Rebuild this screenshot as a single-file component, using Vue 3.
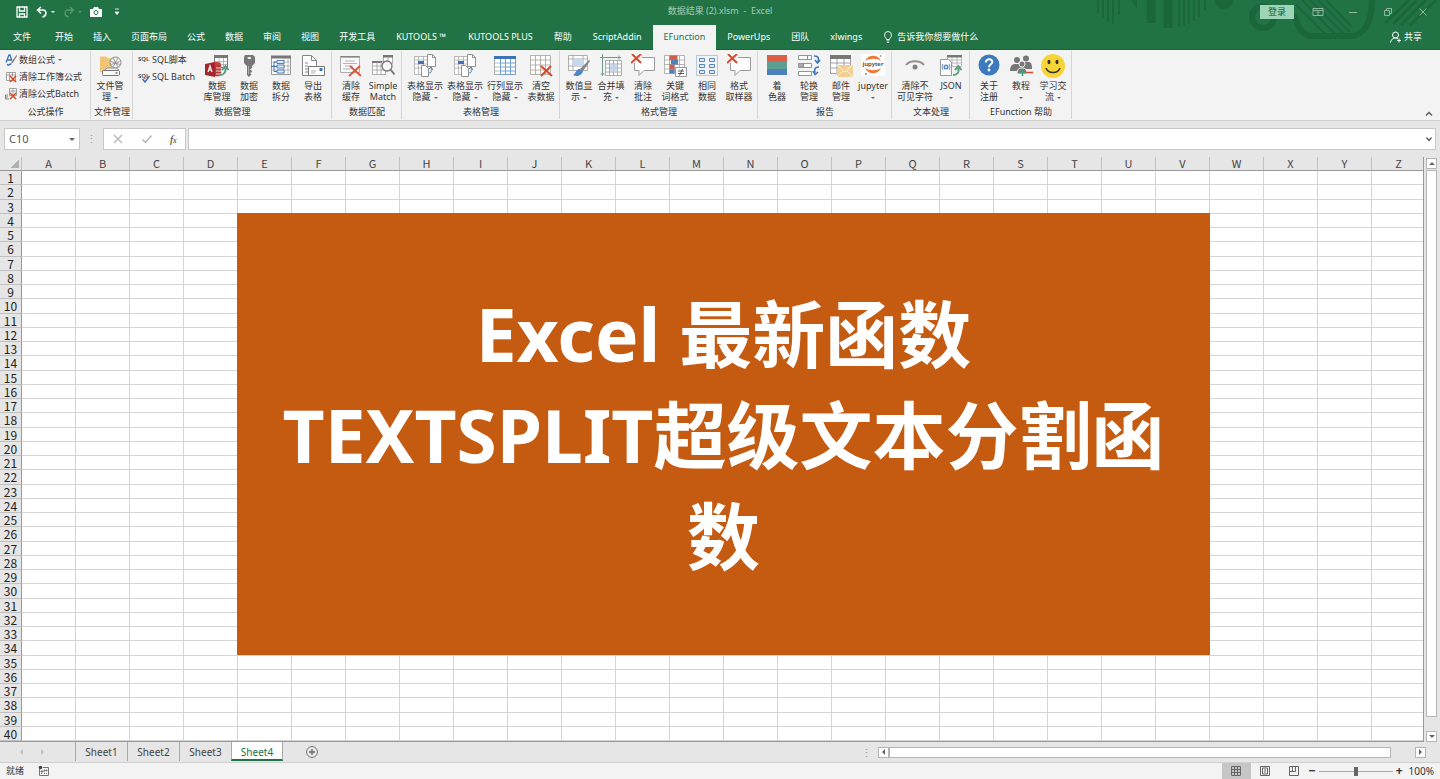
<template>
    <div class="excel">
        <svg class="symbols" aria-hidden="true">
            <symbol id="array" viewBox="0 0 12 12">
                <path d="M1 8.500 4 1h1l2 6M2.200 6H6" fill="none" stroke="#3c74b8" stroke-width="1.300" />
                <path d="M11.500 1 7 7.500 5.500 10l2.500-1.500L12 2z" fill="#777" />
                <path d="M2 10.500c2 1 3 .5 4-1" fill="none" stroke="#3c74b8" stroke-width="1.500" />
            </symbol>
            <symbol id="clear-book" viewBox="0 0 12 12">
                <path d="M1.500 1.500h9v8h-9zM1.500 4h9M4.500 1.500v8M7.500 1.500v4" fill="#fff" stroke="#8a8a8a" stroke-width=".8" />
                <path d="m5 5 6 6M11 5l-6 6" stroke="#d9492c" stroke-width="1.600" />
            </symbol>
            <symbol id="clear-batch" viewBox="0 0 12 12">
                <path d="M4.500.5h7v7h-7zM4.500 3h7M8 .5v7" fill="#fff" stroke="#8a8a8a" stroke-width=".8" />
                <path d="M3 7H.5v4H4M.5 9H3" fill="none" stroke="#777" stroke-width=".9" />
                <path d="m5 5 6 6M11 5l-6 6" stroke="#d9492c" stroke-width="1.600" />
            </symbol>
            <symbol id="check" viewBox="0 0 12 12">
                <path d="m4.500 8 2.500 3 4.500-6" fill="none" stroke="#3c74b8" stroke-width="1.500" />
            </symbol>
            <symbol id="files" viewBox="0 0 24 24">
                <path d="M2 4V2.500h6L9.500 4H14v14H2z" fill="#f0c577" />
                <circle cx="17.500" cy="8.500" r="5.500" fill="#f4f4f4" stroke="#858585" />
                <path d="M12.500 7c3 2 7 2 10 0M12.500 11c3-2 7-2 10 0M15 4l5 9M20 4l-5 9" fill="none" stroke="#858585" stroke-width=".8" />
                <path d="m7 16 2-2h9l3 2" fill="#eee" stroke="#858585" stroke-width=".8" />
                <rect x="4.500" y="16.500" width="17" height="5" rx="1" fill="#f8f8f8" stroke="#777" />
                <circle cx="18.500" cy="19" r="1" fill="#777" />
            </symbol>
            <symbol id="database" viewBox="0 0 24 24">
                <path d="M9.500 1.500h13v12h-13z" fill="#fff" stroke="#777" />
                <path d="M9 1h14v3H9z" fill="#777" />
                <path d="M10 7.500h12M10 10.500h12M14 4v9M18.500 4v9" stroke="#aaa" stroke-width=".8" />
                <ellipse cx="11.500" cy="10" rx="4.500" ry="2" fill="#c8403c" />
                <path d="M9 11h7v10c-2 2-5 1-7 1z" fill="#b53a38" />
                <path d="M11 14h5M11 17h5M11 20h5" stroke="#fff" stroke-width=".8" />
                <path d="M0 10 10 8v15L0 21z" fill="#a4262c" />
                <path d="m3 18 2-6 2 6M3.800 16h2.500" fill="none" stroke="#fff" stroke-width="1.200" />
                <path d="M15 21c4 0 6-3 5.500-7M17 16l3.500-4 3 4" fill="none" stroke="#5c9e83" stroke-width="2" />
            </symbol>
            <symbol id="key" viewBox="0 0 24 24">
                <path d="M8 1h8l2 2v6l-3 3v2l-2 1.500 2 1.500v1l-2 1 1.500 1.500L12 23l-2-2v-9L7 9V3z" fill="#777" />
                <rect x="10.500" y="3" width="3.500" height="2" rx="1" fill="#f3f3f3" />
                <path d="M11.500 12v8" stroke="#bbb" stroke-width=".8" />
            </symbol>
            <symbol id="split" viewBox="0 0 24 24">
                <path d="M2.500 2.500h19v18h-19z" fill="#fff" stroke="#808080" stroke-width=".8" />
                <path d="M2 1.500h20v3H2z" fill="#777" />
                <path d="M3 8h19M3 12h19M3 16h19M15 4v16M19 4v16" stroke="#aaa" stroke-width=".8" />
                <path d="M8 6.500h7v3H8zM8 11h7v3H8zM8 16h7v3H8z" fill="#e5effa" stroke="#3c74b8" stroke-width=".9" />
                <path d="M8 8H5v9.500h3M2 12.500h6" fill="none" stroke="#3c74b8" />
            </symbol>
            <symbol id="export" viewBox="0 0 24 24">
                <path d="M1.500 1.500h9l5 5v15h-14z" fill="#fff" stroke="#858585" />
                <path d="M10.500 1.500v5h5M4 9h3M4 12h3M4 15h3M4 18h3" fill="none" stroke="#858585" />
                <path d="M7.500 12.500h16v9h-16z" fill="#fff" stroke="#777" />
                <path d="M10 17h5M10 19h4" stroke="#999" stroke-width=".8" />
                <path d="M18.500 14h3v3h-3z" fill="#3c74b8" />
            </symbol>
            <symbol id="clear-cache" viewBox="0 0 24 24">
                <path d="M1.500 3.500h19v15h-19z" fill="#fafafa" stroke="#999" stroke-width=".8" />
                <path d="M1 2.500h20" stroke="#888" />
                <path d="M6 7h10M4 9.500h14M6 12h8M4 15h8" stroke="#aaa" stroke-width=".9" />
                <path d="m11 12 11 10M21 12 10 22" stroke="#d9593e" stroke-width="2" />
            </symbol>
            <symbol id="match" viewBox="0 0 24 24">
                <path d="M12.500 2.500h9v7h-9zM1.500 7.500h13v13h-13z" fill="#fff" stroke="#999" stroke-width=".8" />
                <path d="M12 1h10v2.500H12zM1 7h10v2H1z" fill="#777" />
                <path d="M2 12h11M2 16h11M6 8v12M10 8v12M17 3v5" stroke="#999" stroke-width=".8" />
                <circle cx="16" cy="12" r="5" fill="#f7f7f7" stroke="#777" stroke-width="1.300" />
                <path d="m19.500 15.500 4 5" stroke="#777" stroke-width="2" />
            </symbol>
            <symbol id="show-hide" viewBox="0 0 24 24">
                <path d="M1.500 2.500h13v18h-13zM1.500 6h13M1.500 10h13M1.500 14h10M5.500 2.500v18M10.500 2.500v18" fill="#fff" stroke="#aaa" stroke-width=".8" />
                <path d="M5 7h6v3H5z" fill="#3c74b8" />
                <path d="M14.500.500h5l3 3v9h-8z" fill="#fff" stroke="#888" stroke-width=".9" />
                <path d="M19.500.5v3h3" fill="none" stroke="#888" stroke-width=".9" />
                <path d="M8.500 11.500h4l3 3v8h-7z" fill="#fff" stroke="#888" stroke-width=".9" />
                <path d="M18 14c1 4 0 5-2 5M20 16l-2-3-2 2" fill="none" stroke="#3c74b8" stroke-width=".9" />
            </symbol>
            <symbol id="rows-cols" viewBox="0 0 24 24">
                <path d="M1.500 2.500h21v18h-21z" fill="#fff" stroke="#999" stroke-width=".8" />
                <path d="M1 2h22v3H1z" fill="#3c74b8" />
                <path d="M2 9h5M2 13h5M2 17h5" stroke="#aaa" stroke-width=".8" />
                <path d="M7.500 5v15.500h15V5M8 9h14M8 13h14M8 17h14M12.500 5v15M17.500 5v15" fill="none" stroke="#72a0cf" />
            </symbol>
            <symbol id="clear-table" viewBox="0 0 24 24">
                <path d="M1.500 1.500h20v19h-20zM2 6h19M2 11h19M2 16h19M6.500 2v18M11.500 2v18M16.500 2v18" fill="#fff" stroke="#b0a8a0" stroke-width=".9" />
                <path d="m12 12 11 10M22 12 12 22" stroke="#d9492c" stroke-width="2" />
            </symbol>
            <symbol id="value-show" viewBox="0 0 24 24">
                <path d="M1.500 1.500h19v15h-19zM2 5h18M2 12h18M6 2v14M16 2v14" fill="#fff" stroke="#999" stroke-width=".8" />
                <path d="M6 5h10v7H6z" fill="#c4d9f0" />
                <path d="m22 6 1 1-7 10-3-2z" fill="#858585" />
                <path d="M13 15c-4-1-4 5-7 6 3 2 9 1 10-4z" fill="#4d86c6" />
            </symbol>
            <symbol id="merge" viewBox="0 0 24 24">
                <path d="M3.500 0v22M1 3.500h21M20 1.500v4M1.500 20h4" fill="none" stroke="#71998b" />
                <path d="M6.500 6.500h16v15h-16zM7 10h15M7 14h15M7 18h15M10.500 7v14M14.500 7v14M18.500 7v14" fill="#fff" stroke="#999" stroke-width=".8" />
                <path d="M11 10.500h7.500V18H11z" fill="#bdd3ea" opacity=".8" />
            </symbol>
            <symbol id="clear-note" viewBox="0 0 24 24">
                <path d="M3.500 3.500h20v13H13l-5 5v-5H3.500z" fill="#fff" stroke="#999" />
                <path d="M0 0h11v9H0z" fill="#f3f3f3" />
                <path d="m1 0 9 9M10 0 0 9" stroke="#d9492c" stroke-width="2" />
            </symbol>
            <symbol id="keywords" viewBox="0 0 24 24">
                <path d="M1.500 1.500h20v18h-20zM2 6h19M2 10.500h19M2 15h19M6.500 2v17M11.500 2v17M16.500 2v17" fill="#fff" stroke="#aaa" stroke-width=".9" />
                <path d="M6.500 1.500h8V6h-8zM6.500 10.500h5v5h-5z" fill="#d25f4b" />
                <path d="M8 6h7v4.500H8zM6.500 15.500h5v4h-5z" fill="#4d82bd" />
                <path d="M12.500 13.500h11v9h-11z" fill="#fff" stroke="#999" />
                <path d="M15 17h6M15 19.500h6M19.500 15l-3 6.500" stroke="#444" stroke-width=".9" />
            </symbol>
            <symbol id="same-data" viewBox="0 0 24 24">
                <path d="M1.500 1.500h21v20h-21z" fill="none" stroke="#72a0cf" stroke-dasharray="1 1" />
                <path d="M4.500 4.500h5v3h-5zM4.500 10.500h5v3h-5zM4.500 16.500h5v3h-5zM14.500 4.500h5v3h-5zM14.500 10.500h5v3h-5zM14.500 16.500h5v3h-5z" fill="#dfeaf6" stroke="#5689c1" />
            </symbol>
            <symbol id="colours" viewBox="0 0 24 24">
                <path d="M2 1h20v7H2z" fill="#dc6047" />
                <path d="M2 8h20v7H2z" fill="#5b9f90" />
                <path d="M2 15h20v6H2z" fill="#4b7fbd" />
            </symbol>
            <symbol id="rotate" viewBox="0 0 24 24">
                <path d="M1.500 1.500h13v4h-13zM1.500 9.500h13v4h-13zM1.500 17.500h13v4h-13z" fill="#fff" stroke="#888" stroke-width=".9" />
                <path d="M10.500 1.500v4M6.500 9.500v4" stroke="#888" />
                <path d="M2 10h4v3H2z" fill="#aaa" />
                <path d="M17 2c5 0 5 3 4 6M18 6l2.500 3L23 6M22 13c-4 0-5 2-4 6M16 17l2 3.500 3-2.500" fill="none" stroke="#3c74b8" stroke-width="1.500" />
            </symbol>
            <symbol id="mail" viewBox="0 0 24 24">
                <path d="M1.500 2.500h20v17h-20zM2 9h19M2 14h19M8 3v16M15 3v16" fill="#fff" stroke="#999" stroke-width=".9" />
                <path d="M1 1h21v4H1z" fill="#777" />
                <path d="M8 11h16v12H8z" fill="#f2cf92" />
                <path d="m8 11 8 7 8-7M8 23l6-6M24 23l-6-6" fill="none" stroke="#fff0d7" />
            </symbol>
            <symbol id="jupyter" viewBox="0 0 24 24">
                <path d="M0 0h24v22H0z" fill="#fff" />
                <path d="M4 7c3-7 13-7 16 0-4-3-12-3-16 0M4 14c3 7 13 7 16 0-4 3-12 3-16 0" fill="#ee7836" />
                <circle cx="19.500" cy="2" r=".8" fill="#777" /><circle cx="5" cy="20" r=".9" fill="#777" />
            </symbol>
            <symbol id="eye" viewBox="0 0 24 24">
                <path d="M3 11c4-5 14-5 18 0" fill="none" stroke="#92928b" stroke-width="2" />
                <circle cx="12" cy="13" r="2.500" fill="#808080" />
            </symbol>
            <symbol id="json" viewBox="0 0 24 24">
                <path d="M8.500 1.500h14v11h-14zM9 6h13M9 9h13M13 2v10M18 2v10" fill="#fff" stroke="#aaa" stroke-width=".8" />
                <path d="M8 1h15v2.500H8z" fill="#777" />
                <path d="M1.500 5.500h8l3 3v13h-11z" fill="#fff" stroke="#999" />
                <circle cx="7" cy="13" r="2.500" fill="#5689c1" /><circle cx="7" cy="13" r="1" fill="#fff" />
                <path d="m4 10-1 3 1 3M10 10l1 3-1 3" fill="none" stroke="#5689c1" stroke-width=".9" />
                <path d="M14 21c5 0 6-3 5.500-7M16 16l3.500-4 3 4" fill="none" stroke="#5c9e83" stroke-width="2" />
            </symbol>
            <symbol id="help" viewBox="0 0 24 24">
                <circle cx="12" cy="11" r="10.500" fill="#3d79bd" />
                <path d="M8.800 8.500c0-4.500 7-4 6.500-.3-.3 2.300-3.300 2-3.300 5" fill="none" stroke="#fff" stroke-width="2" />
                <circle cx="12" cy="16" r="1.400" fill="#fff" />
            </symbol>
            <symbol id="people" viewBox="0 0 24 24">
                <circle cx="8" cy="6" r="3" fill="#777" /><circle cx="17" cy="4.500" r="3" fill="#777" />
                <path d="M1 17c0-6 3-7 5-7h5c2 0 3 2 3 7zM12 11c1-3 2-3 3-3h5c2 0 3 2 3 7h-8z" fill="#777" />
                <circle cx="13" cy="10" r="3" fill="#777" stroke="#f3f3f3" />
                <path d="M8 20c0-5 2-6 5-6s5 1 5 6z" fill="#777" stroke="#f3f3f3" />
                <path d="M10 18.500h7M13.500 15v7" stroke="#40a080" stroke-width="1.500" />
                <path d="M17 18.500h7" stroke="#d9492c" stroke-width="1.500" />
            </symbol>
            <symbol id="smile" viewBox="0 0 24 24">
                <circle cx="12" cy="12" r="12" fill="#f7d536" />
                <ellipse cx="8" cy="8" rx="1.500" ry="2.200" fill="#333" /><ellipse cx="16" cy="8" rx="1.500" ry="2.200" fill="#333" />
                <path d="M5 14c2 6 12 6 14 0" fill="none" stroke="#333" stroke-width="1.500" />
            </symbol>
        </svg>

        <header class="top">
            <svg class="pattern" width="350" height="50" viewBox="1090 0 350 50" aria-hidden="true">
                <g fill="none" stroke="#1c663c">
                    <path d="M1098 0v13M1103 0v18M1108 0v22M1113 0v24M1119 0v15M1179 0v27M1184 0v26M1189 0v24M1194 0v21M1199 0v17M1205 0v10" stroke-width="2" />
                    <path d="M1151 0v23M1168 0v28" stroke-width="9" />
                    <circle cx="1263" cy="17" r="11" stroke-width="6" />
                    <path d="M1294 14c3 12 8 22 18 22h40c12 0 20-15 20-36" stroke-width="6" />
                    <path d="m1296 5 30 30M1302 0l34 35M1310 0l34 34M1318 0l32 32M1326 0l26 27" stroke-width="2" />
                    <path d="m1385 23 24-23M1393 24l24-24M1401 25l25-25M1410 25l26-25" stroke-width="3" />
                </g>
                <path d="M1131 0h6v8zM1215 0h18a9 9 0 0 1-18 0z" fill="#1c663c" />
            </svg>
            <div class="title_bar">
                <div class="quick">
                    <button aria-label="保存"><svg width="12" height="12" viewBox="0 0 12 12"><path d="M1 1h10v10H1zM3.500 1v4h5V1M3.500 11V8h5v3" fill="none" stroke="#fff" stroke-width="1.300" /></svg></button>
                    <button aria-label="撤消"><svg width="12" height="12" viewBox="0 0 12 12"><path d="M5 1 1.500 4 5 7.500M2 4h5c4 0 4 6-.5 7" fill="none" stroke="#fff" stroke-width="1.500" /></svg><i class="caret light"></i></button>
                    <button class="dim" aria-label="恢复"><svg width="12" height="12" viewBox="0 0 12 12"><path d="m7 1 3.500 3L7 7.500M10 4H5c-4 0-4 6 .5 7" fill="none" stroke="#fff" stroke-width="1.300" /></svg><i class="caret light"></i></button>
                    <button aria-label="照相机"><svg width="12" height="12" viewBox="0 0 12 12"><path d="M0 3h3l1-2h4l1 2h3v8H0z" fill="#fff" /><circle cx="6" cy="6.500" r="2" fill="none" stroke="#217346" /></svg></button>
                    <button aria-label="自定义"><svg width="6" height="8" viewBox="0 0 6 8"><path d="M1 1h4M1 4h4L3 6.500z" fill="#fff" stroke="#fff" stroke-width=".8" /></svg></button>
                </div>
                <h1>数据结果 (2).xlsm&nbsp; -&nbsp; Excel</h1>
                <div class="window_buttons">
                    <button class="login">登录</button>
                    <button aria-label="功能区显示选项"><svg width="12" height="12" viewBox="0 0 12 12"><path d="M1 2.500h10v7H1zM1 4.500h10M6 9V6M4.500 7 6 5.500 7.500 7" /></svg></button>
                    <button aria-label="最小化"><svg width="12" height="12" viewBox="0 0 12 12"><path d="M2 6.500h8" /></svg></button>
                    <button aria-label="还原"><svg width="12" height="12" viewBox="0 0 12 12"><path d="M2.500 4.500h5v5h-5zM4.500 4.500v-2h5v5h-2" /></svg></button>
                    <button aria-label="关闭"><svg width="12" height="12" viewBox="0 0 12 12"><path d="m2.500 2.500 7 7M9.500 2.500l-7 7" /></svg></button>
                </div>
            </div>
            <nav class="tabs">
                <button
                    v-for="tab in tabs"
                    :key="tab"
                    :class="{ active: activeTab === tab, latin: /[a-z]/i.test(tab) }"
                    @click="activeTab = tab"
                >{{ tab }}</button>
                <button class="tell">
                    <svg width="10" height="12" viewBox="0 0 10 12"><path d="M3.500 8.500C3.500 7 1.500 6.500 1.500 4a3.500 3.500 0 0 1 7 0c0 2.500-2 3-2 4.500zM3.500 10h3M4 11.500h2" fill="none" stroke="#fff" stroke-width=".9" /></svg>
                    告诉我你想要做什么
                </button>
                <button class="share">
                    <svg width="12" height="12" viewBox="0 0 12 12"><circle cx="5.500" cy="4" r="3" fill="none" stroke="#fff" /><path d="M.5 11.500C1 8.500 3 7 5.500 7c1 0 2 .3 2.500 1M9 7.500v4M7 9.500h4" fill="none" stroke="#fff" /></svg>
                    共享
                </button>
            </nav>
        </header>

        <section class="ribbon">
            <div v-for="group in groups" :key="group.name" class="group">
                <div class="items">
                    <div v-if="group.list" class="list" :class="group.size">
                        <button v-for="entry in group.list" :key="entry.text">
                            <svg width="12" height="12">
                                <use v-if="entry.icon" :href="'#' + entry.icon" />
                                <text v-if="entry.sql" x="0" y="7">SQL</text>
                            </svg>
                            {{ entry.text }}<i v-if="entry.menu" class="caret"></i>
                        </button>
                    </div>
                    <button v-for="(item, i) in group.items" :key="i" class="item" :class="{ wide: item.wide }">
                        <svg width="24" height="24">
                            <use :href="'#' + item.icon" />
                            <text v-if="item.icon === 'jupyter'" x="12" y="12" text-anchor="middle">jupyter</text>
                        </svg>
                        <span>{{ item.lines[0] }}</span>
                        <span>{{ item.lines[1] }}<i v-if="item.menu" class="caret" :class="{ alone: !item.lines[1] }"></i></span>
                    </button>
                </div>
                <div class="group_name">{{ group.name }}</div>
            </div>
            <button class="collapse" aria-label="折叠功能区"><svg width="8" height="6" viewBox="0 0 8 6"><path d="m1 4.500 3-3 3 3" fill="none" stroke="#555" stroke-width="1.300" /></svg></button>
        </section>

        <section class="formula_bar">
            <div class="name_box">
                <input v-model="cellName" aria-label="名称框" />
                <button aria-label="名称列表"><i class="caret"></i></button>
            </div>
            <span class="grip">⋮</span>
            <div class="formula_buttons">
                <button aria-label="取消"><svg width="12" height="12" viewBox="0 0 12 12"><path d="m2 2 8 8M10 2l-8 8" fill="none" stroke="#b5b5b5" stroke-width="1.200" /></svg></button>
                <button aria-label="输入"><svg width="12" height="12" viewBox="0 0 12 12"><path d="m1.500 6.500 3 3 6-7" fill="none" stroke="#b5b5b5" stroke-width="1.500" /></svg></button>
                <button class="fx" aria-label="插入函数">f<small>x</small></button>
            </div>
            <div class="formula">
                <input v-model="formula" aria-label="编辑栏" />
                <button aria-label="展开编辑栏"><svg width="8" height="6" viewBox="0 0 8 6"><path d="m1.500 1.500 2.500 3 2.500-3" fill="none" stroke="#555" stroke-width="1.300" /></svg></button>
            </div>
        </section>

        <main class="sheet_area">
            <div class="sheet">
                <table>
                    <thead>
                        <tr>
                            <th class="corner"><i></i></th>
                            <th v-for="col in columns" :key="col">{{ col }}</th>
                        </tr>
                    </thead>
                    <tbody>
                        <tr v-for="row in rowCount" :key="row">
                            <th>{{ row }}</th>
                            <td v-for="col in columns" :key="col"></td>
                        </tr>
                    </tbody>
                </table>
                <div class="banner">
                    <p>Excel 最新函数</p>
                    <p>TEXTSPLIT超级文本分割函数</p>
                </div>
            </div>
            <div class="v_scroll">
                <button aria-label="向上滚动"><i class="arrow up"></i></button>
                <div class="thumb"></div>
                <button aria-label="向下滚动"><i class="arrow down"></i></button>
            </div>
        </main>

        <footer>
            <div class="sheet_bar">
                <div class="sheet_nav">
                    <button aria-label="上一个工作表"><i class="arrow left"></i></button>
                    <button aria-label="下一个工作表"><i class="arrow right"></i></button>
                </div>
                <button
                    v-for="sheet in sheets"
                    :key="sheet"
                    class="sheet_tab"
                    :class="{ active: activeSheet === sheet }"
                    @click="activeSheet = sheet"
                >{{ sheet }}</button>
                <button class="add" aria-label="新工作表"><svg width="14" height="14" viewBox="0 0 14 14"><circle cx="7" cy="7" r="5.500" fill="none" stroke="#777" /><path d="M4 7h6M7 4v6" stroke="#666" stroke-width="1.300" /></svg></button>
                <span class="grip end">⋮</span>
                <div class="h_scroll">
                    <button aria-label="向左滚动"><i class="arrow left"></i></button>
                    <div class="thumb"></div>
                    <button aria-label="向右滚动"><i class="arrow right"></i></button>
                </div>
            </div>
            <div class="status_bar">
                <span>就绪</span>
                <svg class="macro" width="12" height="12" viewBox="0 0 12 12"><path d="M1.500 4v6.500h9v-8H5M3 6h2v1H3zM6 5h1v1H6zM8 5h1v1H8zM3 8.500h1M6 8.500h1M8 8.500h1" fill="none" stroke="#666" stroke-width=".9" /><circle cx="2.500" cy="2.500" r="1.800" fill="#444" /></svg>
                <div class="views">
                    <button class="active" aria-label="普通"><svg width="12" height="12" viewBox="0 0 12 12"><path d="M1.500 1.500h9v9h-9zM1.500 4.500h9M1.500 7.500h9M4.500 1.500v9M7.500 1.500v9" /></svg></button>
                    <button aria-label="页面布局"><svg width="12" height="12" viewBox="0 0 12 12"><path d="M1.500 1.500h9v9h-9zM3.500 3h5v6h-5zM5 5h2M5 7h2" /></svg></button>
                    <button aria-label="分页预览"><svg width="12" height="12" viewBox="0 0 12 12"><path d="M1.500 1.500h9v9h-9zM1.500 6.500h6v-5M4.500 1.500v5" /></svg></button>
                </div>
                <button class="zoom_step" aria-label="缩小">−</button>
                <input v-model="zoom" class="zoom" type="range" min="0" max="200" aria-label="显示比例" />
                <button class="zoom_step" aria-label="放大">+</button>
                <span class="percent">{{ zoom }}%</span>
            </div>
        </footer>
    </div>
</template>

<script setup>
    import { ref } from "vue";

    const tabs = [
        "文件", "开始", "插入", "页面布局", "公式", "数据", "审阅", "视图", "开发工具",
        "KUTOOLS ™", "KUTOOLS PLUS", "帮助", "ScriptAddin", "EFunction", "PowerUps", "团队", "xlwings"
    ];
    const sheets = ["Sheet1", "Sheet2", "Sheet3", "Sheet4"];
    const columns = "ABCDEFGHIJKLMNOPQRSTUVWXYZ".split("");
    const rowCount = 40;

    const activeTab = ref("EFunction");
    const activeSheet = ref("Sheet4");
    const cellName = ref("C10");
    const formula = ref("");
    const zoom = ref(100);

    const groups = [
        {
            name: "公式操作",
            size: "large",
            list: [
                { icon: "array", text: "数组公式", menu: true },
                { icon: "clear-book", text: "清除工作簿公式" },
                { icon: "clear-batch", text: "清除公式Batch" }
            ]
        },
        { name: "文件管理", items: [{ icon: "files", lines: ["文件管", "理"], menu: true }] },
        {
            name: "数据管理",
            size: "small",
            list: [
                { sql: true, text: "SQL脚本" },
                { icon: "check", sql: true, text: "SQL Batch" }
            ],
            items: [
                { icon: "database", lines: ["数据", "库管理"] },
                { icon: "key", lines: ["数据", "加密"] },
                { icon: "split", lines: ["数据", "拆分"] },
                { icon: "export", lines: ["导出", "表格"] }
            ]
        },
        {
            name: "数据匹配",
            items: [
                { icon: "clear-cache", lines: ["清除", "缓存"] },
                { icon: "match", lines: ["Simple", "Match"] }
            ]
        },
        {
            name: "表格管理",
            items: [
                { icon: "show-hide", lines: ["表格显示", "隐藏"], menu: true, wide: true },
                { icon: "show-hide", lines: ["表格显示", "隐藏"], menu: true, wide: true },
                { icon: "rows-cols", lines: ["行列显示", "隐藏"], menu: true, wide: true },
                { icon: "clear-table", lines: ["清空", "表数据"] }
            ]
        },
        {
            name: "格式管理",
            items: [
                { icon: "value-show", lines: ["数值显", "示"], menu: true },
                { icon: "merge", lines: ["合并填", "充"], menu: true },
                { icon: "clear-note", lines: ["清除", "批注"] },
                { icon: "keywords", lines: ["关键", "词格式"] },
                { icon: "same-data", lines: ["相同", "数据"] },
                { icon: "clear-note", lines: ["格式", "取样器"] }
            ]
        },
        {
            name: "报告",
            items: [
                { icon: "colours", lines: ["着", "色器"] },
                { icon: "rotate", lines: ["轮换", "管理"] },
                { icon: "mail", lines: ["邮件", "管理"] },
                { icon: "jupyter", lines: ["jupyter", ""], menu: true }
            ]
        },
        {
            name: "文本处理",
            items: [
                { icon: "eye", lines: ["清除不", "可见字符"], wide: true },
                { icon: "json", lines: ["JSON", ""], menu: true }
            ]
        },
        {
            name: "EFunction 帮助",
            items: [
                { icon: "help", lines: ["关于", "注册"] },
                { icon: "people", lines: ["教程", ""], menu: true },
                { icon: "smile", lines: ["学习交", "流"], menu: true }
            ]
        }
    ];
</script>

<style>
    body {
        margin: 0;
    }
</style>

<style scoped>
    .excel {
        display: flex;
        flex-direction: column;
        height: 100vh;
        overflow: hidden;
        background: #e6e6e6;
        color: #333;
        font: 9px/12px "Noto Sans", "Noto Sans CJK SC", sans-serif;
    }

    .excel * {
        box-sizing: border-box;
    }

    .symbols {
        display: none;
    }

    button {
        display: flex;
        align-items: center;
        padding: 0;
        border: 0;
        background: none;
        color: inherit;
        font: inherit;
        white-space: nowrap;
    }

    input {
        min-width: 0;
        padding: 0;
        border: 0;
        outline: 0;
        background: none;
        color: inherit;
        font: inherit;
    }

    svg {
        flex: none;
    }

    .caret {
        display: inline-block;
        margin-left: 3px;
        border: 2px solid transparent;
        border-top-color: #666;
        border-bottom: 0;
        vertical-align: middle;
    }

    .caret.light {
        border-top-color: #fff;
    }

    .caret.alone {
        margin-left: 0;
    }

    /* title bar and ribbon tabs */
    .top {
        position: relative;
        background: #217346;
        color: #fff;
    }

    .pattern {
        position: absolute;
        top: 0;
        right: 0;
    }

    .title_bar {
        position: relative;
        display: grid;
        grid-template-columns: 1fr auto 1fr;
        height: 24px;
    }

    .quick {
        display: flex;
        align-items: center;
        gap: 8px;
        padding-left: 16px;
    }

    .quick button:last-child {
        margin-left: 4px;
    }

    .quick .dim {
        opacity: 0.25;
    }

    h1 {
        margin: 0;
        color: #a9cbb7;
        font-size: 9px;
        font-weight: 400;
        line-height: 22px;
    }

    .window_buttons {
        display: flex;
        align-items: center;
        justify-content: flex-end;
        gap: 23px;
        padding-right: 11px;
    }

    .window_buttons svg {
        fill: none;
        stroke: #8db79e;
    }

    .window_buttons .login {
        height: 14px;
        margin-right: -5px;
        padding: 0 8px;
        background: #9fd5b7;
        color: #185c37;
    }

    .tabs {
        position: relative;
        display: flex;
        height: 26px;
        padding: 1px 18px 1px 3px;
        border-bottom: 1px solid #1b6239;
    }

    .tabs button {
        padding: 0 10px;
    }

    .tabs button.latin {
        padding: 0 11px;
    }

    .tabs button:first-child {
        margin-right: 4px;
    }

    .tabs button.active {
        margin-bottom: -2px;
        padding-bottom: 2px;
        background: #f3f3f3;
        color: #217346;
    }

    .tabs .tell {
        gap: 4px;
    }

    .tabs .share {
        gap: 2px;
        margin-left: auto;
        padding: 0;
    }

    /* ribbon */
    .ribbon {
        display: flex;
        height: 71px;
        padding-top: 1px;
        border-bottom: 1px solid #d0d0d0;
        background: #f3f3f3;
    }

    .group {
        display: flex;
        flex-direction: column;
        height: 68px;
        padding: 3px 2px 0 3px;
        border-right: 1px solid #d5d5d5;
    }

    .items {
        display: flex;
        height: 52px;
    }

    .items text {
        fill: #444;
        font-size: 6px;
        font-weight: 600;
    }

    .item {
        flex-direction: column;
        width: 32px;
        line-height: 11px;
    }

    .item.wide {
        width: 40px;
    }

    .item svg {
        margin-bottom: 2px;
    }

    .item span {
        min-height: 11px;
    }

    .list {
        display: flex;
        flex-direction: column;
        gap: 5px;
    }

    .list.large {
        width: 85px;
        padding-left: 2px;
    }

    .list.small {
        width: 65px;
        padding-left: 2px;
    }

    .list button {
        gap: 2px;
    }

    .list .caret {
        margin-left: 1px;
    }

    .group_name {
        align-self: center;
        white-space: nowrap;
    }

    .collapse {
        align-self: flex-end;
        margin: 0 7px 3px auto;
    }

    /* formula bar */
    .formula_bar {
        display: flex;
        height: 36px;
        padding: 7px 4px;
        font-size: 11px;
    }

    .name_box,
    .formula_buttons,
    .formula {
        display: flex;
        border: 1px solid #c8c8c8;
        background: #fff;
    }

    .name_box {
        width: 76px;
        padding: 0 4px;
    }

    .name_box input {
        flex: 1;
        color: #555;
    }

    .name_box .caret {
        border-width: 3px 3px 0;
    }

    .grip {
        width: 23px;
        color: #999;
        font-size: 11px;
        line-height: 22px;
        text-align: center;
    }

    .formula_buttons {
        justify-content: space-around;
        width: 83px;
        margin-right: 2px;
    }

    .fx {
        font: italic 11px "Liberation Serif", serif;
    }

    .fx small {
        font-size: 8px;
        line-height: 16px;
        align-self: flex-end;
    }

    .formula {
        flex: 1;
        padding: 0 2px 0 4px;
    }

    .formula input {
        flex: 1;
    }

    /* sheet */
    .sheet_area {
        display: flex;
        flex: 1;
        min-height: 0;
    }

    .sheet {
        position: relative;
        flex: 1;
        overflow: hidden;
        border-right: 1px solid #999;
        border-bottom: 1px solid #999;
    }

    /* the last column runs a little under the scroll bar */
    table {
        width: calc(100% + 3px);
        height: 100%;
        table-layout: fixed;
        border-collapse: separate;
        border-spacing: 0;
    }

    th,
    td {
        padding: 0;
        border: 0 solid #d4d4d4;
        border-width: 0 1px 1px 0;
    }

    td {
        background: #fff;
    }

    th {
        border-color: #c0c0c0;
        background: #e6e6e6;
        color: #444;
        font: 11px/13px "Noto Sans CJK SC", sans-serif;
    }

    thead tr {
        height: 14px;
    }

    thead th {
        border-bottom-color: #999;
    }

    tbody th {
        border-right-color: #999;
        color: #222;
        font-size: 12px;
    }

    .corner {
        width: 22px;
    }

    .corner i {
        display: block;
        width: 9px;
        height: 9px;
        margin-left: 10px;
        background: linear-gradient(135deg, transparent 50%, #b0b0b0 50%);
    }

    /* covers E4:V34 */
    .banner {
        position: absolute;
        top: 56px;
        bottom: 86px;
        left: 237px;
        right: 213px;
        display: flex;
        flex-direction: column;
        justify-content: center;
        padding: 0 20px;
        background: #c55a11;
        color: #fff;
        font-size: 73px;
        font-weight: 700;
        line-height: 101px;
        text-align: center;
    }

    .banner p {
        margin: 0;
    }

    .v_scroll {
        display: flex;
        flex-direction: column;
        width: 16px;
        padding: 1px 3px 0 2px;
    }

    .v_scroll button,
    .h_scroll button {
        justify-content: center;
        width: 11px;
        height: 11px;
        border: 1px solid #b5b5b5;
        background: #fff;
    }

    .thumb {
        flex: 1;
        border: 1px solid #b5b5b5;
        background: #fff;
    }

    .v_scroll .thumb {
        margin: 1px 0 14px;
    }

    .arrow {
        border: 3px solid transparent;
    }

    .arrow.up {
        border-top: 0;
        border-bottom-color: #666;
    }

    .arrow.down {
        border-bottom: 0;
        border-top-color: #666;
    }

    .arrow.left {
        border-left: 0;
        border-right-color: #666;
    }

    .arrow.right {
        border-right: 0;
        border-left-color: #666;
    }

    /* sheet tabs */
    .sheet_bar {
        display: flex;
        height: 21px;
        border-bottom: 1px solid #d0d0d0;
        font-size: 10px;
    }

    .sheet_nav {
        display: flex;
        gap: 18px;
        width: 75px;
        padding-left: 20px;
        opacity: 0.3;
    }

    .sheet_tab {
        justify-content: center;
        width: 52px;
        height: 19px;
        border-left: 1px solid #aaa;
        color: #444;
    }

    .sheet_tab.active {
        padding-top: 2px;
        border-right: 1px solid #aaa;
        border-bottom: 2px solid #217346;
        background: #fff;
        color: #217346;
    }

    .add {
        margin-left: 22px;
    }

    .grip.end {
        margin-left: auto;
    }

    .h_scroll {
        display: flex;
        align-items: center;
        width: 39%;
        padding: 0 14px 0 0;
    }

    .h_scroll .thumb {
        height: 11px;
        margin-right: 24px;
    }

    /* status bar */
    .status_bar {
        display: flex;
        align-items: center;
        height: 16px;
        padding: 0 6px;
        background: #f3f3f3;
    }

    .macro {
        margin-left: 14px;
    }

    .views {
        display: flex;
        height: 16px;
        margin-left: auto;
    }

    .views button {
        justify-content: center;
        width: 29px;
    }

    .views .active {
        background: #c6c6c6;
    }

    .views svg {
        fill: none;
        stroke: #666;
    }

    .zoom_step {
        font-size: 12px;
        font-weight: 700;
    }

    .zoom {
        width: 74px;
        height: 12px;
        margin: 0 3px;
        appearance: none;
        background: linear-gradient(#aaa, #aaa) center / 100% 1px no-repeat;
    }

    .zoom::-webkit-slider-thumb {
        width: 4px;
        height: 9px;
        appearance: none;
        background: #666;
    }

    .percent {
        margin-left: 6px;
        font-size: 10px;
    }
</style>
